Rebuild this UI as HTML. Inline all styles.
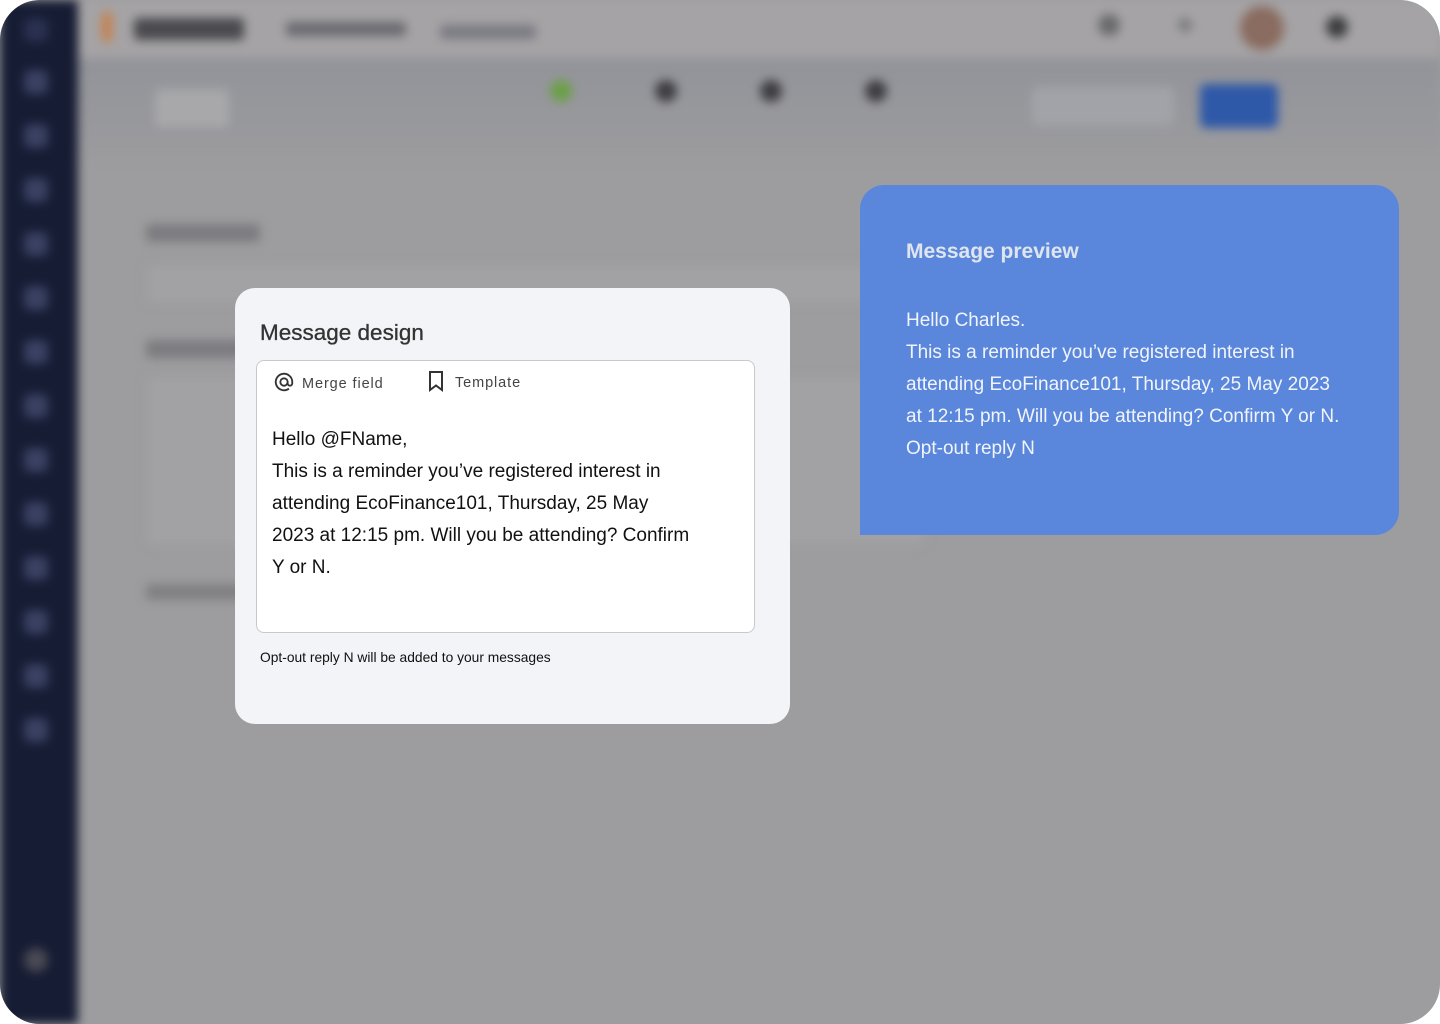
<!DOCTYPE html>
<html><head><meta charset="utf-8"><style>
*{margin:0;padding:0;box-sizing:border-box}
html,body{width:1440px;height:1024px;background:#fff;overflow:hidden;font-family:"Liberation Sans",Arial,sans-serif}
.frame{position:absolute;left:0;top:0;width:1440px;height:1024px;border-radius:40px;overflow:hidden;background:#9d9d9f}
.bg{position:absolute;inset:0;filter:blur(5px)}
.side{position:absolute;left:0;top:0;width:78px;height:1024px;background:#161c33}
.ico{position:absolute;left:24px;width:24px;height:24px;border-radius:6px;background:#3a4163}
.top{position:absolute;left:78px;top:0;right:0;height:58px;background:#a5a3a5}
.bar{position:absolute;left:78px;top:58px;right:0;height:100px;background:linear-gradient(#929399,#9b9b9e)}
.b{position:absolute;background:#6e6e72;border-radius:4px}
.dot{position:absolute;width:22px;height:22px;border-radius:50%;background:#3d3d40}
.design{position:absolute;left:235px;top:288px;width:555px;height:436px;background:#f3f4f8;border-radius:20px}
.design h2{position:absolute;left:25px;top:32px;font-size:22.5px;font-weight:normal;color:#333;-webkit-text-stroke:0.3px #333}
.box{position:absolute;left:21px;top:72px;width:499px;height:273px;background:#fff;border:1px solid #c9c9cc;border-radius:8px}
.tool{position:absolute;top:12px;font-size:14.5px;color:#444;letter-spacing:.9px}
.body{position:absolute;left:15px;top:63px;font-size:19px;line-height:32px;color:#111}
.opt{position:absolute;left:25px;top:362px;font-size:13.8px;color:#111}
.prev{position:absolute;left:860px;top:185px;width:539px;height:350px;background:#5a87db;border-radius:24px 24px 24px 0}
.prev h2{position:absolute;left:46px;top:55px;font-size:21px;font-weight:bold;color:#dfe5ef}
.prev p{position:absolute;left:46px;top:120px;font-size:19px;line-height:32px;color:#f1f4fb}
</style></head><body>
<div class="frame">
<div class="bg">
 <div class="side">
  <div class="ico" style="top:18px;background:#2a3050"></div>
  <div class="ico" style="top:70px"></div><div class="ico" style="top:124px"></div>
  <div class="ico" style="top:178px"></div><div class="ico" style="top:232px"></div>
  <div class="ico" style="top:286px"></div><div class="ico" style="top:340px"></div>
  <div class="ico" style="top:394px"></div><div class="ico" style="top:448px"></div>
  <div class="ico" style="top:502px"></div><div class="ico" style="top:556px"></div>
  <div class="ico" style="top:610px"></div><div class="ico" style="top:664px"></div>
  <div class="ico" style="top:718px"></div>
  <div class="ico" style="top:948px;border-radius:50%;background:#4a4a55"></div>
 </div>
 <div class="top">
  <div class="b" style="left:24px;top:12px;width:10px;height:30px;background:#c7804a"></div>
  <div class="b" style="left:56px;top:18px;width:110px;height:22px;background:#4a4a4f"></div>
  <div class="b" style="left:208px;top:22px;width:120px;height:14px;background:#6a6a70"></div>
  <div class="b" style="left:362px;top:25px;width:96px;height:14px;background:#7a7a82"></div>
  <div class="dot" style="left:1020px;top:14px;background:#6a6a6c"></div>
  <div class="dot" style="left:1100px;top:18px;width:14px;height:14px;background:#7a7a7c"></div>
  <div class="dot" style="left:1162px;top:6px;width:44px;height:44px;background:#8a6c60"></div>
  <div class="dot" style="left:1248px;top:16px;background:#3d3d40"></div>
 </div>
 <div class="bar">
  <div class="b" style="left:78px;top:32px;width:72px;height:36px;background:#a8a8ab;border:1px solid #bbb"></div>
  <div class="dot" style="left:472px;top:22px;background:#6aa046"></div>
  <div class="dot" style="left:577px;top:22px"></div>
  <div class="dot" style="left:682px;top:22px"></div>
  <div class="dot" style="left:787px;top:22px"></div>
  <div class="b" style="left:955px;top:30px;width:140px;height:36px;background:#a2a3a8;border:1px solid #b0b0b4"></div>
  <div class="b" style="left:1122px;top:26px;width:78px;height:44px;background:#2e58a8;border-radius:6px"></div>
 </div>
 <div class="b" style="left:146px;top:224px;width:114px;height:18px;background:#7c7c80"></div>
 <div class="b" style="left:146px;top:264px;width:760px;height:40px;background:#a2a2a4;border:1px solid #939395"></div>
 <div class="b" style="left:146px;top:340px;width:100px;height:18px;background:#7c7c80"></div>
 <div class="b" style="left:146px;top:376px;width:780px;height:170px;background:#a2a2a4;border:1px solid #939395"></div>
 <div class="b" style="left:146px;top:584px;width:100px;height:16px;background:#808084"></div>
</div>
<div class="design">
 <h2>Message design</h2>
 <div class="box">
  <div class="tool" style="left:16px;top:10px">
   <svg width="22" height="22" viewBox="0 0 24 24" style="vertical-align:-5px;margin-right:7px" fill="none" stroke="#333" stroke-width="2"><circle cx="12" cy="12" r="4"/><path d="M16 12v1.5a2.5 2.5 0 0 0 5 0V12a9 9 0 1 0-3.6 7.2"/></svg>Merge field
  </div>
  <div class="tool" style="left:170px;top:9px">
   <svg width="18" height="22" viewBox="0 0 18 22" style="vertical-align:-5px;margin-right:10px" fill="none" stroke="#333" stroke-width="2"><path d="M3 2h12v18l-6-4.5L3 20z"/></svg>Template
  </div>
  <div class="body">Hello @FName,<br>This is a reminder you’ve registered interest in<br>attending EcoFinance101, Thursday, 25 May<br>2023 at 12:15 pm. Will you be attending? Confirm<br>Y or N.</div>
 </div>
 <div class="opt">Opt-out reply N will be added to your messages</div>
</div>
<div class="prev">
 <h2>Message preview</h2>
 <p>Hello Charles.<br>This is a reminder you’ve registered interest in<br>attending EcoFinance101, Thursday, 25 May 2023<br>at 12:15 pm. Will you be attending? Confirm Y or N.<br>Opt-out reply N</p>
</div>
</div>
</body></html>
